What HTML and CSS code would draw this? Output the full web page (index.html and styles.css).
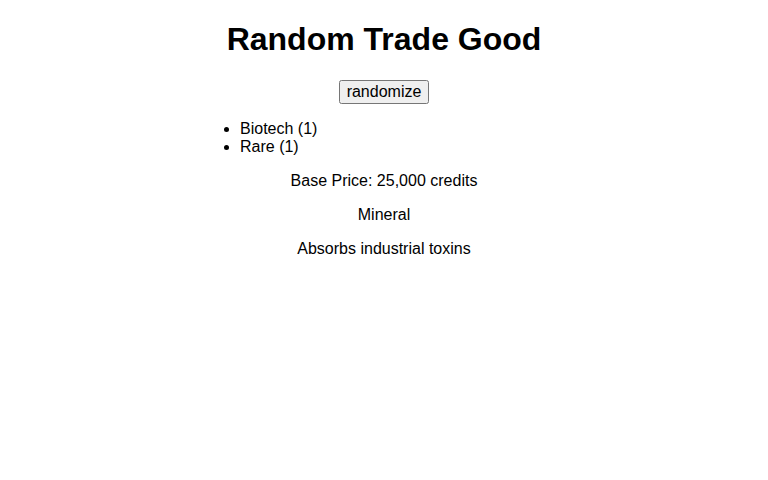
FILE: index.html
```html
<!DOCTYPE html>
<html>
<head>
<meta charset="utf-8">
<title>Random Trade Good</title>
<link rel="stylesheet" href="styles.css">
</head>
<body>
<div class="app">
  <h1 class="title">Random Trade Good</h1>
  <button class="randomize">randomize</button>
  <ul class="tags">
    <li>Biotech (1)</li>
    <li>Rare (1)</li>
  </ul>
  <p class="line">Base Price: 25,000 credits</p>
  <p class="line">Mineral</p>
  <p class="line">Absorbs industrial toxins</p>
</div>
</body>
</html>
```
FILE: styles.css
```css
body {
  margin: 0 8px;
  font-family: "Liberation Sans", Arial, sans-serif;
  color: #000;
  background: #fff;
}
.app {
  text-align: center;
}
.title {
  font-size: 32px;
  font-weight: bold;
  margin: 21.44px 0;
}
.randomize {
  font-family: "Liberation Sans", Arial, sans-serif;
  font-size: 16px;
}
.tags {
  width: 368px;
  box-sizing: border-box;
  margin: 16px auto;
  padding-left: 40px;
  text-align: left;
}
.line {
  margin: 16px 0;
}
```
